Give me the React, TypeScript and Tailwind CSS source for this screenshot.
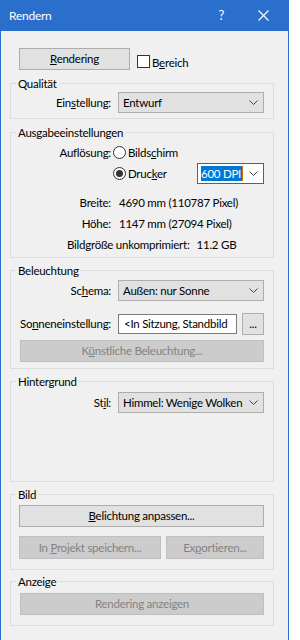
import React from 'react';

const Chevron = () => (
  <svg width="9" height="5" viewBox="0 0 9 5" className="shrink-0">
    <polyline points="0.5,0.5 4.5,4.5 8.5,0.5" fill="none" stroke="#444" strokeWidth="1" />
  </svg>
);

const Select = ({ value, className = '' }: { value: string; className?: string }) => (
  <div className={`h-[21px] w-[146px] flex items-center justify-between pl-[4px] pr-[5px] bg-[#e1e1e1] border border-[#adadad] whitespace-nowrap ${className}`}>
    <span>{value}</span>
    <Chevron />
  </div>
);

const Btn = ({ children, disabled, className = '' }: { children: React.ReactNode; disabled?: boolean; className?: string }) => (
  <div
    className={`h-[22px] flex items-center justify-center border whitespace-nowrap ${
      disabled ? 'bg-[#cccccc] border-[#bfbfbf] text-[#838383]' : 'bg-[#e1e1e1] border-[#adadad] text-black'
    } ${className}`}
  >
    {children}
  </div>
);

const Group = ({ title, children, className = '' }: { title: string; children: React.ReactNode; className?: string }) => (
  <fieldset className={`ml-[9px] w-[264px] border border-[#dcdcdc] ${className}`}>
    <legend className="ml-[5px] px-[2px] leading-[15px]">{title}</legend>
    {children}
  </fieldset>
);

const Radio = ({ checked }: { checked?: boolean }) => (
  <div className="w-[13px] h-[13px] rounded-full border border-[#333] bg-white flex items-center justify-center shrink-0">
    {checked && <div className="w-[7px] h-[7px] rounded-full bg-[#333]" />}
  </div>
);

const Label = ({ children }: { children: React.ReactNode }) => (
  <span className="w-[92px] text-right shrink-0 whitespace-nowrap">{children}</span>
);

export default function App() {
  return (
    <div className="w-[300px] h-[640px] bg-white font-['Lato','Liberation_Sans',sans-serif] text-[11.5px] tracking-[-0.25px] text-black">
      <div className="w-[289px] h-[640px] bg-[#2b6fcd] px-[1px] flex flex-col">
        {/* Title bar */}
        <div className="h-[31px] flex items-center text-white shrink-0">
          <span className="ml-[8px] flex-1 text-[12px]">Rendern</span>
          <span className="mr-[34px] text-[13px]">?</span>
          <svg width="11" height="11" viewBox="0 0 11 11" className="mr-[19px]">
            <path d="M0.5 0.5 L10.5 10.5 M10.5 0.5 L0.5 10.5" stroke="white" strokeWidth="1.1" />
          </svg>
        </div>

        <div className="flex-1 bg-[#f0f0f0] flex flex-col">
          {/* Render button row */}
          <div className="mt-[17px] ml-[18px] h-[22px] flex items-start">
            <Btn className="w-[111px]">
              <span><u>R</u>endering</span>
            </Btn>
            <div className="ml-[7px] mt-[7px] h-[13px] flex items-center">
              <div className="w-[13px] h-[13px] border border-[#333] bg-white" />
              <span className="ml-[2px] leading-[13px] mt-[2px]">B<u>e</u>reich</span>
            </div>
          </div>

          {/* Qualität */}
          <Group title="Qualität" className="mt-[6px]">
            <div className="pl-[8px] pr-[9px] pt-[1px] pb-[5px]">
              <div className="flex items-center">
                <Label>Ein<u>s</u>tellung:</Label>
                <Select value="Entwurf" className="ml-[7px]" />
              </div>
            </div>
          </Group>

          {/* Ausgabeeinstellungen */}
          <Group title="Ausgabeeinstellungen" className="mt-[6px]">
            <div className="pl-[8px] pr-[9px] pt-[2px] pb-[2px]">
              <div className="h-[21px] flex items-center">
                <Label>Auflösung:</Label>
                <div className="ml-[2px]"><Radio /></div>
                <span className="ml-[2px]">Bilds<u>c</u>hirm</span>
              </div>
              <div className="h-[21px] flex items-center">
                <div className="w-[92px] shrink-0" />
                <div className="ml-[2px]"><Radio checked /></div>
                <span className="ml-[2px] flex-1">Druc<u>k</u>er</span>
                <div className="w-[67px] h-[21px] bg-white border border-[#0078d7] flex items-center pl-[3px] pr-[5px] whitespace-nowrap">
                  <span className="bg-[#0078d7] text-white leading-[15px] pr-[1px]">600 DPI</span>
                  <span className="w-[1px] h-[15px] bg-[#d06a10]" />
                  <span className="flex-1" />
                  <Chevron />
                </div>
              </div>
              <div className="mt-[8px] h-[21px] flex items-center">
                <Label>Breite:</Label>
                <span className="ml-[8px]">4690 mm (110787 Pixel)</span>
              </div>
              <div className="h-[21px] flex items-center">
                <Label>Höhe:</Label>
                <span className="ml-[8px]">1147 mm (27094 Pixel)</span>
              </div>
              <div className="h-[21px] flex items-center">
                <span className="ml-[48px]">Bildgröße unkomprimiert:</span>
                <span className="ml-[7px]">11.2 GB</span>
              </div>
            </div>
          </Group>

          {/* Beleuchtung */}
          <Group title="Beleuchtung" className="mt-[5px]">
            <div className="pl-[8px] pr-[9px] pt-[2px] pb-[6px]">
              <div className="flex items-center">
                <Label>Sc<u>h</u>ema:</Label>
                <Select value="Außen: nur Sonne" className="ml-[7px]" />
              </div>
              <div className="mt-[12px] flex items-center">
                <Label>So<u>n</u>neneinstellung:</Label>
                <div className="ml-[7px] w-[119px] h-[20px] bg-white border border-[#7a7a7a] flex items-center pl-[5px] overflow-hidden whitespace-nowrap">
                  &lt;In Sitzung, Standbild
                </div>
                <Btn className="ml-[5px] w-[22px] h-[20px]">...</Btn>
              </div>
              <Btn disabled className="mt-[5px] ml-[1px]">
                <span>K<u>ü</u>nstliche Beleuchtung...</span>
              </Btn>
            </div>
          </Group>

          {/* Hintergrund */}
          <Group title="Hintergrund" className="mt-[5px]">
            <div className="pl-[8px] pr-[9px] pt-[3px] pb-[68px]">
              <div className="flex items-center">
                <Label>St<u>i</u>l:</Label>
                <Select value="Himmel: Wenige Wolken" className="ml-[7px]" />
              </div>
            </div>
          </Group>

          {/* Bild */}
          <Group title="Bild" className="mt-[5px]">
            <div className="pl-[8px] pr-[9px] pt-[3px] pb-[10px]">
              <Btn>
                <span><u>B</u>elichtung anpassen...</span>
              </Btn>
              <div className="mt-[9px] flex gap-[5px]">
                <Btn disabled className="w-[142px] h-[23px]">
                  <span>In <u>P</u>rojekt speichern...</span>
                </Btn>
                <Btn disabled className="flex-1 h-[23px]">
                  <span>Ex<u>p</u>ortieren...</span>
                </Btn>
              </div>
            </div>
          </Group>

          {/* Anzeige */}
          <Group title="Anzeige" className="mt-[4px]">
            <div className="pl-[9px] pr-[9px] pt-[4px] pb-[10px]">
              <Btn disabled>
                <span>Rendering anzeigen</span>
              </Btn>
            </div>
          </Group>
        </div>
      </div>
    </div>
  );
}
